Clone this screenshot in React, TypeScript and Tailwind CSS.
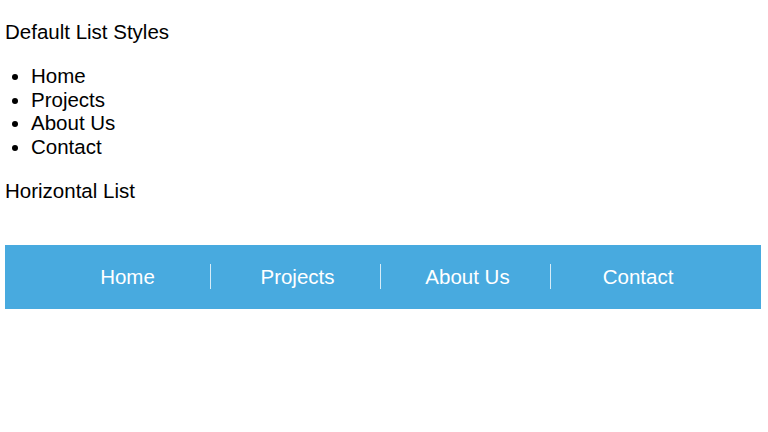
export default function App() {
  const items = ["Home", "Projects", "About Us", "Contact"];
  return (
    <div
      className="bg-white text-black pl-[5px] pt-[20px] text-[20.5px] leading-[23.6px]"
      style={{ fontFamily: '"Liberation Sans", Arial, sans-serif' }}
    >
      <p>Default List Styles</p>
      <ul className="list-disc pl-[26px] mt-[20.5px]">
        {items.map((t) => (
          <li key={t}>{t}</li>
        ))}
      </ul>
      <p className="mt-[20.5px]">Horizontal List</p>
      <nav className="mt-[42px] w-[756px] h-[64px] bg-[#48aadf] flex items-center pl-[36px]">
        {items.map((t, i) => (
          <div
            key={t}
            className={
              "w-[170px] h-[25px] flex items-center justify-center pl-[4px] text-white " +
              (i < 3 ? "border-r border-[#d6ecf8]" : "")
            }
          >
            {t}
          </div>
        ))}
      </nav>
    </div>
  );
}
